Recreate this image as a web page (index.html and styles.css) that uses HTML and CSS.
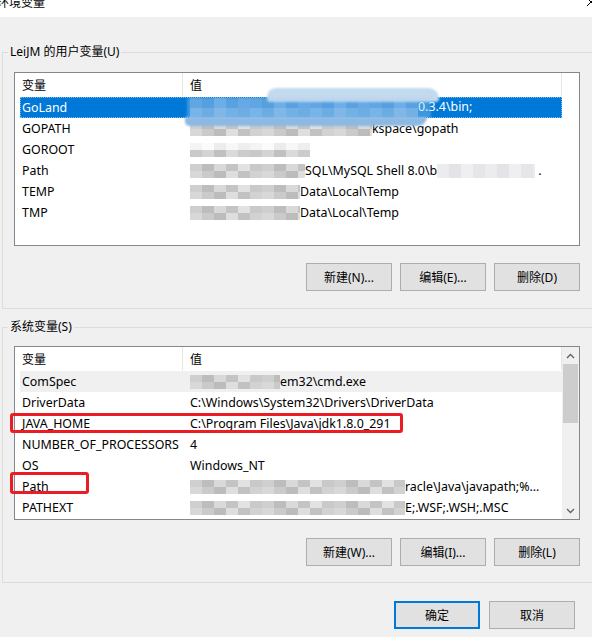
FILE: index.html
```html
<!DOCTYPE html>
<html lang="zh-CN">
<head>
  <meta charset="UTF-8" />
  <meta name="viewport" content="width=device-width, initial-scale=1.0"/>
  <title>环境变量</title>
  <link rel="stylesheet" href="styles.css">
</head>
<body>

  <!-- Title bar -->
  <div class="titlebar">
    <span class="title">环境变量</span>
    <svg class="close" width="8" height="8" viewBox="0 0 8 8"><path d="M0 0L8 8M8 0L0 8" stroke="#000" stroke-width="1"/></svg>
  </div>

  <div class="dialog">

    <!-- User variables -->
    <fieldset class="group group-user">
      <legend>LeiJM 的用户变量(U)</legend>
      <div class="list">
        <div class="list-head">
          <span class="h-name">变量</span>
          <span class="h-value">值</span>
        </div>
        <div class="rows">
          <div class="row selected"><span class="name">GoLand</span><span class="value"><i class="mosaic blue w228"></i>0.3.4\bin;</span></div>
          <div class="row"><span class="name">GOPATH</span><span class="value"><i class="mosaic w182"></i>kspace\gopath</span></div>
          <div class="row"><span class="name">GOROOT</span><span class="value"><i class="mosaic light w120"></i></span></div>
          <div class="row"><span class="name">Path</span><span class="value"><i class="mosaic w115"></i>SQL\MySQL Shell 8.0\b<i class="mosaic pale w98"></i> .</span></div>
          <div class="row"><span class="name">TEMP</span><span class="value"><i class="mosaic w110"></i>Data\Local\Temp</span></div>
          <div class="row"><span class="name">TMP</span><span class="value"><i class="mosaic w110"></i>Data\Local\Temp</span></div>
        </div>
        <!-- smudge over the first rows -->
        <div class="smudge smudge-top"></div>
        <div class="smudge smudge-mid"></div>
        <div class="smudge smudge-low"></div>
      </div>
      <div class="buttons">
        <button class="btn">新建(N)...</button>
        <button class="btn">编辑(E)...</button>
        <button class="btn">删除(D)</button>
      </div>
    </fieldset>

    <!-- System variables -->
    <fieldset class="group group-system">
      <legend>系统变量(S)</legend>
      <div class="list has-scroll">
        <div class="list-body">
          <div class="list-head">
            <span class="h-name">变量</span>
            <span class="h-value">值</span>
          </div>
          <div class="rows">
            <div class="row inactive"><span class="name">ComSpec</span><span class="value"><i class="mosaic w90"></i>em32\cmd.exe</span></div>
            <div class="row"><span class="name">DriverData</span><span class="value">C:\Windows\System32\Drivers\DriverData</span></div>
            <div class="row"><span class="name">JAVA_HOME</span><span class="value">C:\Program Files\Java\jdk1.8.0_291</span></div>
            <div class="row"><span class="name">NUMBER_OF_PROCESSORS</span><span class="value">4</span></div>
            <div class="row"><span class="name">OS</span><span class="value">Windows_NT</span></div>
            <div class="row"><span class="name">Path</span><span class="value"><i class="mosaic w215"></i>racle\Java\javapath;%...</span></div>
            <div class="row"><span class="name">PATHEXT</span><span class="value"><i class="mosaic w215"></i>E;.WSF;.WSH;.MSC</span></div>
          </div>
        </div>
        <div class="scrollbar">
          <div class="arrow"><svg width="9" height="6" viewBox="0 0 9 6"><path d="M1 5L4.5 1.5L8 5" fill="none" stroke="#606060" stroke-width="1.3"/></svg></div>
          <div class="track"><div class="thumb"></div></div>
          <div class="arrow"><svg width="9" height="6" viewBox="0 0 9 6"><path d="M1 1L4.5 4.5L8 1" fill="none" stroke="#606060" stroke-width="1.3"/></svg></div>
        </div>
        <!-- red marks -->
        <div class="mark mark-java"></div>
        <div class="mark mark-path"></div>
      </div>
      <div class="buttons">
        <button class="btn">新建(W)...</button>
        <button class="btn">编辑(I)...</button>
        <button class="btn">删除(L)</button>
      </div>
    </fieldset>

    <div class="footer">
      <button class="btn default">确定</button>
      <button class="btn">取消</button>
    </div>

  </div>

</body>
</html>
```

FILE: styles.css
```css
body {
  margin: 0;
  width: 592px;
  height: 637px;
  overflow: hidden;
  background-color: #f0f0f0;
  font-family: "Noto Sans", "Noto Sans CJK SC", sans-serif;
  font-size: 12px;
  color: #000;
}
.titlebar {
  height: 17px;
  background-color: #fff;
  display: flex;
  justify-content: space-between;
  overflow: hidden;
}
.title {
  font-family: "Noto Sans CJK SC", sans-serif;
  font-size: 12px;
  line-height: 12px;
  margin: -4px 0 0 -3px;
}
.close {
  margin: -2px -3px 0 0;
}
.dialog {
  padding-left: 2px;
}
.group {
  margin: 27px 0 0 0;
  padding: 12px 0 17px 11px;
  border: 1px solid #dcdcdc;
  width: 640px;
  min-width: 0;
  box-sizing: border-box;
}
.group-system {
  margin-top: 10px;
  padding-top: 11px;
  padding-bottom: 16px;
}
.group legend {
  padding: 0 2px;
  margin-left: -6px;
  line-height: 16px;
}
.list {
  width: 566px;
  height: 174px;
  box-sizing: border-box;
  border: 1px solid #828790;
  background-color: #fff;
  position: relative;
}
.has-scroll {
  display: flex;
}
.list-body {
  width: 547px;
  flex: none;
}
.list-head {
  display: flex;
  width: 547px;
  height: 23px;
}
.h-name, .h-value {
  display: flex;
  align-items: center;
  box-sizing: border-box;
  padding-left: 7px;
  border-right: 1px solid #e5e5e5;
  margin: 0;
}
.h-name {
  width: 168px;
}
.h-value {
  flex: 1;
}
.rows {
  padding: 1px 0 0 5px;
}
.row {
  display: flex;
  align-items: center;
  width: 542px;
  height: 21px;
  padding-left: 2px;
  box-sizing: border-box;
  white-space: nowrap;
  overflow: hidden;
  font-size: 12.4px;
}
.row .name {
  width: 168px;
  flex: none;
}
.row.selected {
  background-color: #0078d7;
  color: #fff;
  outline: 1px dotted #7fb9e8;
  outline-offset: -1px;
}
.row.inactive {
  background-color: #f0f0f0;
}
.mosaic {
  display: inline-block;
  height: 14px;
  vertical-align: -3px;
  background:
    linear-gradient(90deg, #cfcfcf 0 12px, #bdbdbd 12px 24px, #d9d9d9 24px 36px, #c4c4c4 36px 48px, #e2e2e2 48px 60px, #c9c9c9 60px 72px) 0 0 / 72px 7px repeat-x,
    linear-gradient(90deg, #d8d8d8 0 12px, #cacaca 12px 24px, #bcbcbc 24px 36px, #dedede 36px 48px, #c2c2c2 48px 60px, #d2d2d2 60px 72px) 0 7px / 72px 7px repeat-x;
}
.mosaic.light {
  background:
    linear-gradient(90deg, #f4f4f4 0 12px, #fbfbfb 12px 24px, #ececec 24px 36px, #f7f7f7 36px 48px, #eeeeee 48px 60px) 0 0 / 60px 7px repeat-x,
    linear-gradient(90deg, #c9c9c9 0 12px, #d4d4d4 12px 24px, #c0c0c0 24px 36px, #dadada 36px 48px, #cccccc 48px 60px) 0 7px / 60px 7px repeat-x;
}
.mosaic.pale {
  background:
    linear-gradient(90deg, #ececee 0 12px, #e4e4e8 12px 24px, #efeff1 24px 36px, #e6e6ea 36px 48px) 0 0 / 48px 14px repeat-x;
}
.mosaic.blue {
  height: 20px;
  vertical-align: middle;
  background:
    linear-gradient(90deg, #3a8fdb 0 12px, #2c86d6 12px 24px, #4d9be0 24px 36px, #2f88d7 36px 48px, #4394dd 48px 60px) 0 0 / 60px 10px repeat-x,
    linear-gradient(90deg, #5fa5e2 0 12px, #4a99de 12px 24px, #6aaae4 24px 36px, #559fe0 36px 48px, #4b9ade 48px 60px) 0 10px / 60px 10px repeat-x;
}
.w90 { width: 90px; }
.w98 { width: 98px; }
.w110 { width: 110px; }
.w115 { width: 115px; }
.w120 { width: 120px; }
.w182 { width: 182px; }
.w215 { width: 215px; }
.w228 { width: 228px; }
.smudge {
  position: absolute;
  filter: blur(1px);
}
.smudge-top {
  left: 252px;
  top: 15px;
  width: 172px;
  height: 14px;
  border-radius: 10px 12px 4px 4px;
  background-color: #c3d9ee;
}
.smudge-mid {
  left: 172px;
  top: 25px;
  width: 244px;
  height: 20px;
  background-color: rgba(170, 210, 240, 0.35);
}
.smudge-low {
  left: 170px;
  top: 44px;
  width: 242px;
  height: 9px;
  border-radius: 0 0 12px 6px;
  background-color: #8cb9e3;
}
.scrollbar {
  width: 17px;
  flex: none;
  background-color: #f0f0f0;
  display: flex;
  flex-direction: column;
}
.arrow {
  height: 17px;
  display: flex;
  align-items: center;
  justify-content: center;
}
.track {
  flex: 1;
  padding: 0 1px;
}
.thumb {
  height: 59px;
  background-color: #cdcdcd;
}
.mark {
  position: absolute;
  border: 3px solid #ec1c24;
  border-radius: 3px;
  box-sizing: border-box;
}
.mark-java {
  left: -5px;
  top: 66px;
  width: 393px;
  height: 20px;
}
.mark-path {
  left: -5px;
  top: 125px;
  width: 79px;
  height: 22px;
}
.buttons {
  width: 566px;
  display: flex;
  justify-content: flex-end;
  gap: 8px;
  margin-top: 17px;
}
.group-system .buttons {
  margin-top: 18px;
}
.btn {
  width: 86px;
  height: 28px;
  box-sizing: border-box;
  padding: 0;
  background-color: #e1e1e1;
  border: 1px solid #adadad;
  font-family: "Noto Sans", "Noto Sans CJK SC", sans-serif;
  font-size: 12px;
  color: #000;
}
.btn.default {
  border: 2px solid #0078d7;
}
.footer {
  display: flex;
  justify-content: flex-end;
  gap: 9px;
  margin-top: 18px;
  padding-right: 17px;
}
```
